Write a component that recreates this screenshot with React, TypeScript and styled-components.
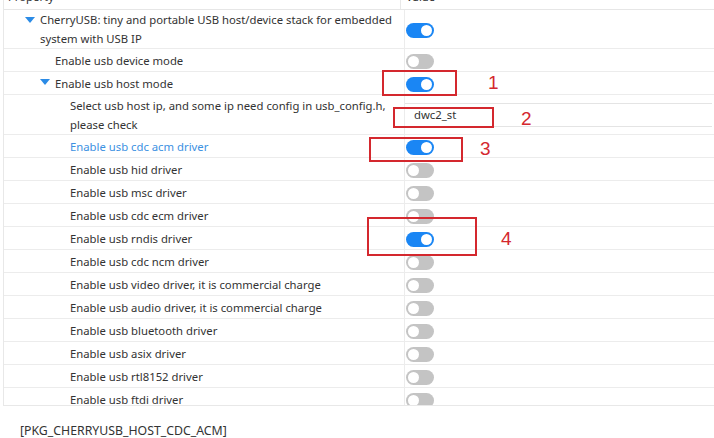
import React from 'react';
import styled, { createGlobalStyle } from 'styled-components';

const GlobalStyle = createGlobalStyle`
  body {
    margin: 0;
    background: #ffffff;
    font-family: 'Noto Sans', 'Open Sans', sans-serif;
  }
`;

const StyledPage = styled.div`
  position: relative;
  width: 714px;
  height: 438px;
  overflow: hidden;
  background: #ffffff;
`;

const StyledTable = styled.div`
  margin-top: -14px;
  margin-left: 3px;
  height: 419px;
  overflow: hidden;
  border-left: 1px solid #e8e8e8;
  border-bottom: 1px solid #e8e8e8;
`;

const StyledHeaderRow = styled.div`
  display: grid;
  grid-template-columns: 400px 1fr;
  height: 23px;
  border-bottom: 1px solid #e6e6e6;
  margin-left: -4px;
`;

const StyledHeaderCell = styled.div<{ $divider?: boolean }>`
  font-size: 11.3px;
  line-height: 22px;
  color: #333333;
  padding-left: ${({ $divider }) => ($divider ? '5px' : '8px')};
  border-left: ${({ $divider }) => ($divider ? '1px solid #e8e8e8' : 'none')};
`;

const StyledRow = styled.div`
  display: grid;
  grid-template-columns: 400px 1fr;
  min-height: 22px;
  border-bottom: 1px solid #ececec;
  overflow: hidden;
`;

const StyledLabelCell = styled.div<{ $level: number }>`
  display: flex;
  align-items: flex-start;
  padding-left: ${({ $level }) => 21 + $level * 15}px;
`;

const StyledArrowSlot = styled.div`
  flex: 0 0 15px;
  height: 20px;
  display: flex;
  align-items: center;
`;

const StyledArrow = styled.div`
  width: 0;
  height: 0;
  border-left: 5px solid transparent;
  border-right: 5px solid transparent;
  border-top: 6px solid #2b8be6;
`;

const StyledLabel = styled.div<{ $active?: boolean }>`
  font-size: 11.3px;
  line-height: 19px;
  color: ${({ $active }) => ($active ? '#3c91e2' : '#333333')};
  max-width: 358px;
  align-self: center;
`;

const StyledValueCell = styled.div`
  display: flex;
  align-items: center;
  padding: 2px 0 0 1px;
  border-left: 1px solid #ececec;
`;

const StyledToggle = styled.div<{ $on: boolean }>`
  position: relative;
  width: 28px;
  height: 15px;
  border-radius: 8px;
  background: ${({ $on }) => ($on ? '#1a86f4' : '#c4c4c4')};
`;

const StyledKnob = styled.div<{ $on: boolean }>`
  position: absolute;
  top: 2px;
  left: ${({ $on }) => ($on ? '15px' : '2px')};
  width: 11px;
  height: 11px;
  border-radius: 50%;
  background: #ffffff;
`;

const StyledInput = styled.div`
  flex: 1;
  align-self: flex-start;
  height: 22px;
  margin: 6px 2px 7px -1px;
  border-top: 1px solid #e4e4e4;
  border-bottom: 1px solid #e4e4e4;
  font-size: 11.3px;
  line-height: 22px;
  color: #333333;
  padding-left: 9px;
`;

const StyledFooter = styled.div`
  padding: 17px 0 0 20px;
  font-size: 12.3px;
  line-height: 16px;
  color: #333333;
`;

const StyledMark = styled.div`
  position: absolute;
  border: 2px solid #d4282e;
  box-sizing: border-box;
`;

const StyledMarkNumber = styled.div`
  position: absolute;
  font-family: 'Liberation Sans', sans-serif;
  font-size: 19px;
  line-height: 20px;
  color: #d4282e;
`;

type Item = {
  label: string;
  level: number;
  expanded?: boolean;
  active?: boolean;
  toggle?: boolean;
  input?: string;
};

const items: Item[] = [
  { label: 'CherryUSB: tiny and portable USB host/device stack for embedded system with USB IP', level: 0, expanded: true, toggle: true },
  { label: 'Enable usb device mode', level: 1, toggle: false },
  { label: 'Enable usb host mode', level: 1, expanded: true, toggle: true },
  { label: 'Select usb host ip, and some ip need config in usb_config.h, please check', level: 2, input: 'dwc2_st' },
  { label: 'Enable usb cdc acm driver', level: 2, active: true, toggle: true },
  { label: 'Enable usb hid driver', level: 2, toggle: false },
  { label: 'Enable usb msc driver', level: 2, toggle: false },
  { label: 'Enable usb cdc ecm driver', level: 2, toggle: false },
  { label: 'Enable usb rndis driver', level: 2, toggle: true },
  { label: 'Enable usb cdc ncm driver', level: 2, toggle: false },
  { label: 'Enable usb video driver, it is commercial charge', level: 2, toggle: false },
  { label: 'Enable usb audio driver, it is commercial charge', level: 2, toggle: false },
  { label: 'Enable usb bluetooth driver', level: 2, toggle: false },
  { label: 'Enable usb asix driver', level: 2, toggle: false },
  { label: 'Enable usb rtl8152 driver', level: 2, toggle: false },
  { label: 'Enable usb ftdi driver', level: 2, toggle: false },
];

const marks = [
  { box: [382, 70, 75, 26], num: '1', at: [488, 73] },
  { box: [393, 107, 101, 21], num: '2', at: [521, 109] },
  { box: [369, 137, 94, 25], num: '3', at: [480, 139] },
  { box: [367, 217, 110, 39], num: '4', at: [501, 229] },
];

const App = () => {
  return (
    <StyledPage>
      <GlobalStyle />
      <StyledTable>
        <StyledHeaderRow>
          <StyledHeaderCell>Property</StyledHeaderCell>
          <StyledHeaderCell $divider>Value</StyledHeaderCell>
        </StyledHeaderRow>
        {items.map((item) => (
          <StyledRow key={item.label}>
            <StyledLabelCell $level={item.level}>
              <StyledArrowSlot>{item.expanded && <StyledArrow />}</StyledArrowSlot>
              <StyledLabel $active={item.active}>{item.label}</StyledLabel>
            </StyledLabelCell>
            <StyledValueCell>
              {item.input !== undefined ? (
                <StyledInput>{item.input}</StyledInput>
              ) : (
                <StyledToggle $on={!!item.toggle}>
                  <StyledKnob $on={!!item.toggle} />
                </StyledToggle>
              )}
            </StyledValueCell>
          </StyledRow>
        ))}
      </StyledTable>
      <StyledFooter>[PKG_CHERRYUSB_HOST_CDC_ACM]</StyledFooter>
      {marks.map((m) => (
        <React.Fragment key={m.num}>
          <StyledMark style={{ left: m.box[0], top: m.box[1], width: m.box[2], height: m.box[3] }} />
          <StyledMarkNumber style={{ left: m.at[0], top: m.at[1] }}>{m.num}</StyledMarkNumber>
        </React.Fragment>
      ))}
    </StyledPage>
  );
};

export default App;
